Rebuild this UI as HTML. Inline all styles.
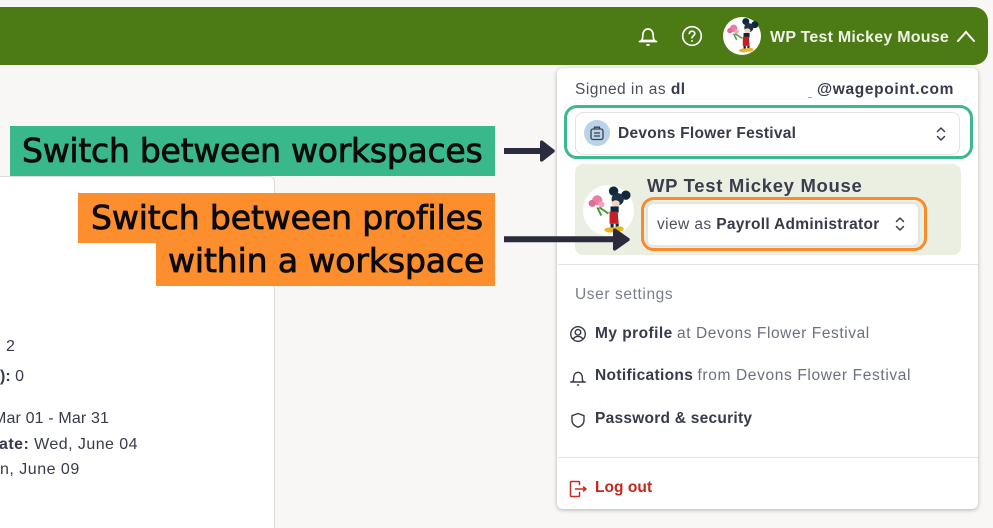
<!DOCTYPE html>
<html><head><meta charset="utf-8">
<style>
html,body{margin:0;padding:0;width:993px;height:528px;overflow:hidden;background:#f9f7f5}
body{position:relative;font-family:"Liberation Sans",sans-serif;color:#373a4a;filter:blur(.3px)}
div,svg,span.a{position:absolute}
.t{white-space:nowrap;font-size:15.5px;line-height:20px}
b{font-weight:bold}
.g{color:#6b7080}
.n{font-family:"DejaVu Sans",sans-serif;font-weight:normal;color:#0b0b0b;white-space:nowrap;font-size:33px;line-height:40px;-webkit-text-stroke:.8px #0b0b0b}
</style></head>
<body>
<svg width="0" height="0" style="position:absolute">
<defs>
<symbol id="mickey" viewBox="0 0 50 50">
<circle cx="25" cy="25" r="25" fill="#fff"/>
<circle cx="30" cy="6" r="4.6" fill="#10283f"/><circle cx="42" cy="10" r="4.6" fill="#10283f"/>
<ellipse cx="34" cy="14" rx="6" ry="6" fill="#1a3148"/>
<ellipse cx="32" cy="18" rx="4" ry="3" fill="#f3d6b8"/>
<rect x="27" y="21" width="8" height="6" fill="#10283f"/>
<path d="M26 26h8l1 12h-9z" fill="#c42020"/>
<rect x="27" y="38" width="3" height="4" fill="#10283f"/><rect x="32" y="38" width="3" height="4" fill="#10283f"/>
<ellipse cx="27" cy="44" rx="6" ry="2.600" fill="#eeb51e"/><ellipse cx="35" cy="43" rx="5" ry="2.600" fill="#eeb51e"/>
<circle cx="14" cy="15" r="5" fill="#ea7fa4"/><circle cx="9" cy="18" r="3.500" fill="#e26a96"/><circle cx="18" cy="19" r="3" fill="#f0a3bf"/>
<path d="M16 22l9 6M14 22l4 8" stroke="#4d9a3c" stroke-width="2" fill="none"/>
</symbol>
</defs>
</svg>

<!-- top bar -->
<div style="left:-30px;top:7px;width:1018px;height:58px;background:#4c7a15;border-radius:14px"></div>
<svg style="left:636px;top:24px" width="24" height="24" viewBox="0 0 24 24" fill="none" stroke="#fff" stroke-width="1.700" stroke-linecap="round"><path d="M5.500 16.500c1.200-1.400 1.300-3 1.300-5.200C6.800 7.600 8.900 5 12 5s5.200 2.600 5.200 6.300c0 2.200.1 3.800 1.300 5.200z"/><path d="M3.500 17.500h17"/><path d="M11 21h2"/></svg>
<svg style="left:680px;top:24px" width="24" height="24" viewBox="0 0 24 24" fill="none" stroke="#fff" stroke-width="1.700" stroke-linecap="round"><circle cx="12" cy="12" r="9.300"/><path d="M9.300 9.500c.3-1.500 1.400-2.300 2.800-2.300 1.500 0 2.700 1 2.700 2.400 0 2.200-2.800 2.200-2.800 4.300"/><path d="M12 16.800v.3"/></svg>
<svg style="left:723px;top:17px" width="38" height="38"><use href="#mickey"/></svg>
<div class="t" style="left:770px;top:28px;color:#eef2e6;font-size:16px;font-weight:bold;letter-spacing:.22px">WP Test Mickey Mouse</div>
<svg style="left:956px;top:29px" width="20" height="14" viewBox="0 0 20 14" fill="none" stroke="#fff" stroke-width="2" stroke-linecap="round"><path d="M2 12l8-9 8 9"/></svg>

<!-- left card -->
<div style="left:-20px;top:176px;width:293px;height:370px;background:#fff;border:1px solid #e2dcd8;border-radius:6px"></div>
<div class="t" style="left:6px;top:337px;font-size:16px">2</div>
<div class="t" style="left:0;top:367px;font-size:16px"><b>):</b> 0</div>
<div class="t" style="left:-7px;top:409px;font-size:16px;letter-spacing:.15px">Mar 01 - Mar 31</div>
<div class="t" style="left:-1px;top:435px;font-size:16px;letter-spacing:.45px"><b>ate:</b> Wed, June 04</div>
<div class="t" style="left:0;top:460px;font-size:16px;letter-spacing:.5px">n, June 09</div>

<!-- dropdown -->
<div style="left:557px;top:68px;width:421px;height:441px;background:#fff;border-radius:6px;box-shadow:0 1px 4px rgba(0,0,0,.28)"></div>
<div class="t" style="left:575px;top:80px;letter-spacing:.48px;color:#4a4d5c">Signed in as <b style="color:#373a4a">dl</b></div>
<div class="t" style="left:817px;top:80px;letter-spacing:.65px"><b>@wagepoint.com</b></div>
<div style="left:808px;top:97px;width:4px;height:1px;background:#aaa"></div>

<!-- workspace select -->
<div style="left:575px;top:112px;width:383px;height:41px;border:1.500px solid #e3e3e3;border-radius:8px;background:#fff"></div>
<div style="left:584px;top:120px;width:26px;height:26px;border-radius:50%;background:#b8d3ea"></div>
<svg style="left:589px;top:125px" width="16" height="16" viewBox="0 0 16 16" fill="none" stroke="#3c3f4e" stroke-width="1.300"><rect x="2" y="4" width="12" height="10.500" rx="2"/><path d="M5.500 4V2.200h5V4M5 8h6M5 11h6"/></svg>
<div class="t" style="left:618px;top:124px;font-weight:bold;letter-spacing:.27px;font-size:15.500px">Devons Flower Festival</div>
<svg style="left:934px;top:125px" width="14" height="18" viewBox="0 0 14 18" fill="none" stroke="#3c3f4e" stroke-width="1.500" stroke-linecap="round" stroke-linejoin="round"><path d="M3.500 6.500L7 3l3.500 3.500M3.500 11.500L7 15l3.500-3.500"/></svg>
<div style="left:564px;top:105px;width:403px;height:48px;border:3px solid #3bb98c;border-radius:13px"></div>

<!-- profile box -->
<div style="left:575px;top:164px;width:386px;height:91px;background:#ebefe2;border-radius:8px"></div>
<svg style="left:583px;top:185px" width="51" height="51"><use href="#mickey"/></svg>
<div class="t" style="left:647px;top:176px;font-size:18.500px;font-weight:bold;letter-spacing:.68px;color:#3a3d4b">WP Test Mickey Mouse</div>
<div style="left:646px;top:202px;width:274px;height:45px;background:#fff;border:2px solid #e4e4e0;border-radius:7px;box-sizing:border-box"></div>
<div class="t" style="left:657px;top:215px;letter-spacing:.4px;color:#4c4f5e">view as <b style="color:#373a4a;letter-spacing:.3px">Payroll Administrator</b></div>
<svg style="left:893px;top:215px" width="14" height="18" viewBox="0 0 14 18" fill="none" stroke="#3c3f4e" stroke-width="1.500" stroke-linecap="round" stroke-linejoin="round"><path d="M3.500 6.500L7 3l3.500 3.500M3.500 11.500L7 15l3.500-3.500"/></svg>
<div style="left:641px;top:197px;width:280px;height:48px;border:3px solid #f88c2d;border-radius:13px"></div>

<div style="left:558px;top:264px;width:420px;height:1px;background:#e4e4e4"></div>
<div class="t" style="left:575px;top:285px;letter-spacing:.6px;color:#7a7e8c">User settings</div>

<svg style="left:569px;top:325px" width="18" height="18" viewBox="0 0 18 18" fill="none" stroke="#373a4a" stroke-width="1.400"><circle cx="9" cy="9" r="7.300"/><circle cx="9" cy="7.300" r="2.800"/><path d="M4.200 14.200c1-2 2.800-2.800 4.800-2.800s3.800.8 4.800 2.800"/></svg>
<div class="t" style="left:595px;top:324px"><b style="letter-spacing:.45px">My profile</b> <span class="g" style="letter-spacing:.58px">at Devons Flower Festival</span></div>
<svg style="left:569px;top:368px" width="18" height="18" viewBox="0 0 18 18" fill="none" stroke="#373a4a" stroke-width="1.400" stroke-linecap="round"><path d="M3.800 13.500c.8-1 .9-2.200.9-3.800C4.700 6.600 6.500 4.300 9 4.300s4.300 2.300 4.300 5.400c0 1.600.1 2.800.9 3.800"/><path d="M1.800 14h14.400"/><path d="M8.500 17h1"/></svg>
<div class="t" style="left:595px;top:366px"><b style="letter-spacing:.33px">Notifications</b> <span class="g" style="letter-spacing:.64px">from Devons Flower Festival</span></div>
<svg style="left:570px;top:411px" width="16" height="18" viewBox="0 0 16 18" fill="none" stroke="#373a4a" stroke-width="1.400" stroke-linejoin="round"><path d="M8 2.500l6 2.200v4.500c0 3.500-2.500 5.700-6 7-3.500-1.300-6-3.500-6-7V4.700z"/></svg>
<div class="t" style="left:595px;top:409px"><b style="letter-spacing:.25px">Password &amp; security</b></div>

<div style="left:558px;top:457px;width:420px;height:1px;background:#e4e4e4"></div>
<svg style="left:569px;top:479px" width="19" height="19" viewBox="0 0 19 19" fill="none" stroke="#cb2a1f" stroke-width="1.500" stroke-linecap="round" stroke-linejoin="round"><path d="M10.500 5.500V3.500a1 1 0 0 0-1-1H2.500a1 1 0 0 0-1 1v13a1 1 0 0 0 1 1h7a1 1 0 0 0 1-1v-3"/><path d="M6.500 10h10M14.500 8l2.500 2-2.500 2"/></svg>
<div class="t" style="left:595px;top:478px;color:#c3271c;letter-spacing:.05px"><b>Log out</b></div>

<!-- annotations -->
<div style="left:10px;top:126px;width:485px;height:50px;background:#39b98b"></div>
<div class="n" style="left:22px;top:131px;letter-spacing:-.25px">Switch between workspaces</div>
<div style="left:78px;top:193px;width:417px;height:50px;background:#fc8e2e"></div>
<div style="left:156px;top:243px;width:339px;height:43px;background:#fc8e2e"></div>
<div class="n" style="left:91px;top:198px;letter-spacing:-.1px">Switch between profiles</div>
<div class="n" style="left:168px;top:241px;letter-spacing:-.1px">within a workspace</div>

<!-- arrows -->
<svg style="left:500px;top:136px" width="60" height="30"><path d="M4 15h38" stroke="#2a2b3c" stroke-width="6"/><path d="M40 6c0-1.500 1.500-2.200 2.700-1.200l11.500 9c.8.700.8 1.700 0 2.400l-11.500 9c-1.200 1-2.700.3-2.700-1.200z" fill="#2a2b3c"/></svg>
<svg style="left:500px;top:224px" width="135" height="30"><path d="M4 15.300h112" stroke="#2a2b3c" stroke-width="6"/><path d="M113 6c0-1.500 1.500-2.200 2.700-1.200l13.500 9.500c.8.700.8 1.700 0 2.400l-13.500 9.500c-1.200 1-2.700.3-2.700-1.200z" fill="#2a2b3c"/></svg>
</body></html>
